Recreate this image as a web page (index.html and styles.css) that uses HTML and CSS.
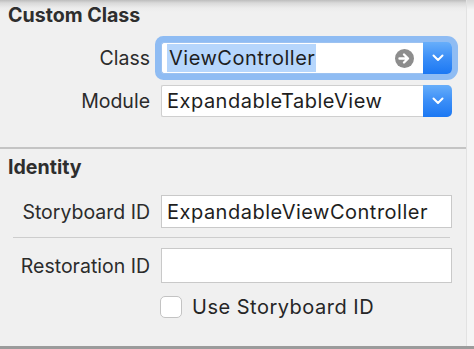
FILE: index.html
```html
<!DOCTYPE html>
<html>
<head>
<meta charset="utf-8">
<link rel="stylesheet" href="styles.css">
</head>
<body>
<div class="frame">
  <div class="inspector">
    <section class="custom">
      <h2 class="heading">Custom Class</h2>
      <div class="row row-class">
        <label class="label">Class</label>
        <div class="combo focused">
          <div class="combo-text"><span class="sel">ViewController</span></div>
          <span class="go">
            <svg width="19" height="19" viewBox="0 0 19 19"><circle cx="9.5" cy="9.5" r="9.5" fill="#8d8d8d"/><path d="M4.5 9.5h8M9 5.5l4 4-4 4" fill="none" stroke="#fff" stroke-width="2.4" stroke-linecap="round" stroke-linejoin="round"/></svg>
          </span>
          <span class="drop"><svg width="12" height="8" viewBox="0 0 12 8"><path d="M1.5 1.5l4.5 4.5 4.5-4.5" fill="none" stroke="#fff" stroke-width="2" stroke-linecap="round" stroke-linejoin="round"/></svg></span>
        </div>
      </div>
      <div class="row row-module">
        <label class="label">Module</label>
        <div class="combo">
          <div class="combo-text">ExpandableTableView</div>
          <span class="drop"><svg width="12" height="8" viewBox="0 0 12 8"><path d="M1.5 1.5l4.5 4.5 4.5-4.5" fill="none" stroke="#fff" stroke-width="2" stroke-linecap="round" stroke-linejoin="round"/></svg></span>
        </div>
      </div>
    </section>
    <section class="identity">
      <h2 class="heading">Identity</h2>
      <div class="row row-sb">
        <label class="label">Storyboard ID</label>
        <div class="field">ExpandableViewController</div>
      </div>
      <div class="sep"></div>
      <div class="row row-rest">
        <label class="label">Restoration ID</label>
        <div class="field"></div>
      </div>
      <div class="row row-check">
        <span class="label"></span>
        <div class="check"><span class="box"></span><span class="check-text">Use Storyboard ID</span></div>
      </div>
    </section>
  </div>
  <div class="gutter"></div>
</div>
<div class="bottom"></div>
</body>
</html>
```
FILE: styles.css
```css
html, body {
  margin: 0;
  padding: 0;
}
body {
  width: 474px;
  height: 349px;
  overflow: hidden;
  display: flex;
  flex-direction: column;
  background: linear-gradient(to bottom, #bdbdbd 0, #d9d9d9 3px, #ececec 8px, #f0f0f0 12px);
  font-family: Inter, "Open Sans", "Liberation Sans", sans-serif;
  color: #262626;
}
.frame {
  flex: 1;
  display: flex;
}
.inspector {
  width: 466px;
}
.gutter {
  flex: 1;
  border-left: 1px solid #e2e2e2;
  background: linear-gradient(to bottom, rgba(0,0,0,0.12) 0, rgba(0,0,0,0) 10px), #f5f5f5;
}
.bottom {
  height: 3px;
  background: #9b9b9b;
}
.heading {
  margin: 0;
  padding-left: 8px;
  font-size: 19.6px;
  line-height: 22px;
  font-weight: 700;
  color: #2e2e2e;
}
.custom {
  padding-top: 4px;
  padding-bottom: 30px;
  border-bottom: 2px solid #c4c4c4;
}
.row {
  display: grid;
  grid-template-columns: 150px 291px;
  column-gap: 11px;
  align-items: center;
}
.label {
  text-align: right;
  font-size: 19.5px;
  color: #2b2b2b;
}
.row-class {
  margin-top: 16px;
}
.row-module {
  margin-top: 11px;
}
.combo {
  height: 32px;
  display: flex;
  align-items: stretch;
  background: #fff;
  border: 1px solid #cfcfcf;
  border-right: none;
  box-sizing: border-box;
  border-radius: 2px 5px 5px 2px;
}
.combo.focused {
  border-color: #9cc2f1;
  box-shadow: 0 0 0 6px #8fbcf3;
  border-radius: 3px 5px 5px 3px;
}
.combo-text {
  flex: 1;
  display: flex;
  align-items: center;
  padding-left: 5px;
  font-size: 20px;
  letter-spacing: 0.5px;
  color: #1e1e1e;
  white-space: nowrap;
  overflow: hidden;
}
.sel {
  background: #b6d6fc;
  padding: 2px 1px 2px 2px;
}
.go {
  display: flex;
  align-items: center;
  padding-right: 9px;
}
.drop {
  width: 29px;
  display: flex;
  align-items: center;
  justify-content: center;
  background: linear-gradient(to bottom, #67aefa 0, #3b8ef7 50%, #1c78f3 100%);
  border-radius: 0 5px 5px 0;
  margin: -1px 0;
}
.identity {
  padding-top: 7px;
}
.row-sb {
  margin-top: 17px;
}
.field {
  height: 33px;
  box-sizing: border-box;
  background: #fff;
  border: 1px solid #c9c9c9;
  display: flex;
  align-items: center;
  padding-left: 5px;
  font-size: 20px;
  letter-spacing: 0.5px;
  color: #1e1e1e;
  white-space: nowrap;
}
.row-rest .field {
  height: 35px;
}
.sep {
  margin: 9px 16px 0 13px;
  height: 1px;
  background: #cdcdcd;
}
.row-rest {
  margin-top: 10px;
}
.row-check {
  margin-top: 12px;
}
.check {
  display: flex;
  align-items: center;
  gap: 10px;
  margin-left: -1px;
}
.box {
  width: 22px;
  height: 22px;
  box-sizing: border-box;
  border: 1px solid #c3c3c3;
  border-radius: 5px;
  background: #fff;
}
.check-text {
  font-size: 20px;
  letter-spacing: 0.5px;
  color: #262626;
}
```
